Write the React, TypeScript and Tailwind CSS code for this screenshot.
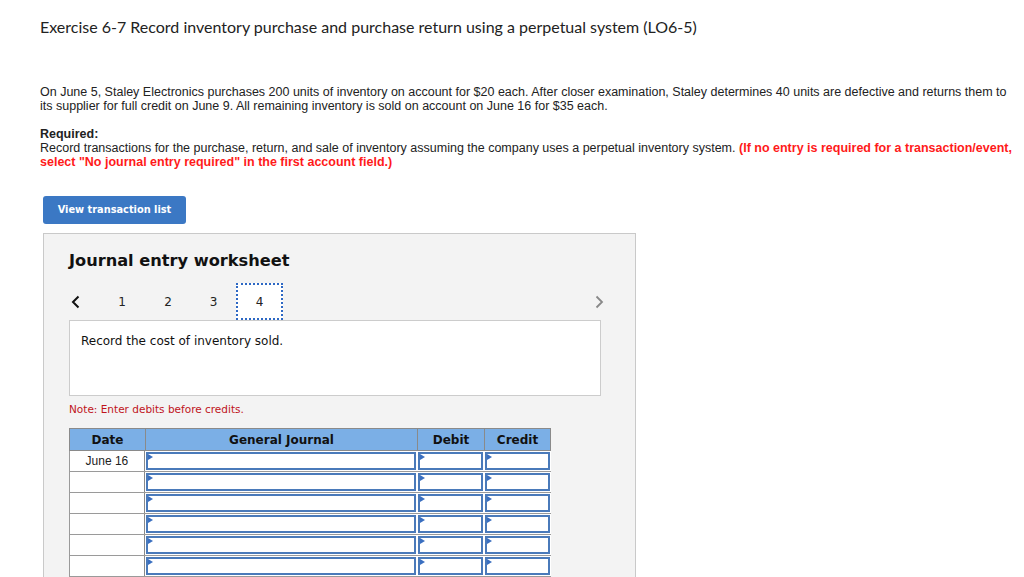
import React from "react";

const rows = ["June 16", "", "", "", "", ""];

function InputCell({ width }: { width: string }) {
  return (
    <div className={`${width} h-full bg-white p-px`}>
      <div className="relative h-full w-full border-2 border-[#4a7aba] bg-white">
        <span className="absolute left-0 top-0 h-0 w-0 border-y-[3px] border-l-[5px] border-y-transparent border-l-[#3a6fc0]" />
      </div>
    </div>
  );
}

export default function App() {
  return (
    <div className="min-h-[577px] bg-white pl-[40px] pr-[6px] pt-[17px] text-[#222]">
      <h1 className="text-[16px] leading-[20px] text-[#222] [font-family:Lato,'Open_Sans',sans-serif]">
        Exercise 6-7 Record inventory purchase and purchase return using a perpetual system (LO6-5)
      </h1>

      <div className="mt-[48px] text-[12.5px] leading-[14px] [font-family:'Liberation_Sans',Arial,sans-serif]">
        <p>
          On June 5, Staley Electronics purchases 200 units of inventory on account for $20 each. After closer
          examination, Staley determines 40 units are defective and returns them to its supplier for full credit on
          June 9. All remaining inventory is sold on account on June 16 for $35 each.
        </p>
        <p className="mt-[14px] font-bold">Required:</p>
        <p>
          Record transactions for the purchase, return, and sale of inventory assuming the company uses a perpetual
          inventory system.{" "}
          <span className="font-bold text-[#ff1a1a]">
            (If no entry is required for a transaction/event, select "No journal entry required" in the first account
            field.)
          </span>
        </p>
      </div>

      <button className="ml-[3px] mt-[27px] flex h-[28px] w-[143px] items-center justify-center rounded-[3px] bg-[#3b78c4] text-[9.8px] font-bold text-white [font-family:'DejaVu_Sans',Verdana,sans-serif]">
        View transaction list
      </button>

      <div className="ml-[3px] mt-[9px] w-[593px] border border-[#c9c9c9] bg-[#f3f3f3] pb-4 pl-[25px] pt-[17px] [font-family:'DejaVu_Sans',Verdana,sans-serif]">
        <h2 className="text-[16.2px] font-bold leading-[20px] text-[#111]">Journal entry worksheet</h2>

        <div className="relative z-10 mt-[12px] flex h-[37px] w-[532px] items-center text-[12px] text-[#222]">
          <div className="flex w-[30px] items-center pl-[1px]">
            <svg width="11" height="14" viewBox="0 0 11 14" fill="none">
              <path d="M8.5 1.5L3 7l5.5 5.5" stroke="#111" strokeWidth="2" />
            </svg>
          </div>
          <div className="flex w-[46px] justify-center">1</div>
          <div className="flex w-[46px] justify-center">2</div>
          <div className="flex w-[45px] justify-center">3</div>
          <div className="flex h-[37px] w-[47px] items-center justify-center border-2 border-dotted border-[#2d68c4] bg-white">
            4
          </div>
          <div className="ml-auto mr-[-3px] flex items-center">
            <svg width="10" height="14" viewBox="0 0 10 14" fill="none">
              <path d="M2.5 1.5L8 7l-5.5 5.5" stroke="#888" strokeWidth="1.8" />
            </svg>
          </div>
        </div>

        <div className="h-[76px] w-[532px] border border-[#cccccc] bg-white pl-[11px] pt-[13px] text-[12px] leading-[14px] text-[#111]">
          Record the cost of inventory sold.
        </div>

        <p className="mt-[6px] text-[10.5px] leading-[14px] text-[#c0141c]">Note: Enter debits before credits.</p>

        <div className="mt-[12px] w-[482px] text-[12px]">
          <div className="flex h-[23px] border border-[#8a8a8a] bg-[#7bafe6] font-bold text-[#111]">
            <div className="flex w-[76px] items-center justify-center border-r border-[#8a8a8a]">Date</div>
            <div className="flex w-[272px] items-center justify-center border-r border-[#8a8a8a]">General Journal</div>
            <div className="flex w-[67px] items-center justify-center border-r border-[#8a8a8a]">Debit</div>
            <div className="flex flex-1 items-center justify-center">Credit</div>
          </div>
          {rows.map((d, i) => (
            <div key={i} className="flex h-[21px] border-b border-l border-[#9a9a9a] bg-white">
              <div className="flex w-[75px] items-center justify-center border-r border-[#8a8a8a] text-[12px] text-[#222] [font-family:'Liberation_Sans',Arial,sans-serif]">
                {d}
              </div>
              <InputCell width="w-[273px]" />
              <InputCell width="w-[67px]" />
              <InputCell width="w-[67px]" />
            </div>
          ))}
        </div>
      </div>
    </div>
  );
}
